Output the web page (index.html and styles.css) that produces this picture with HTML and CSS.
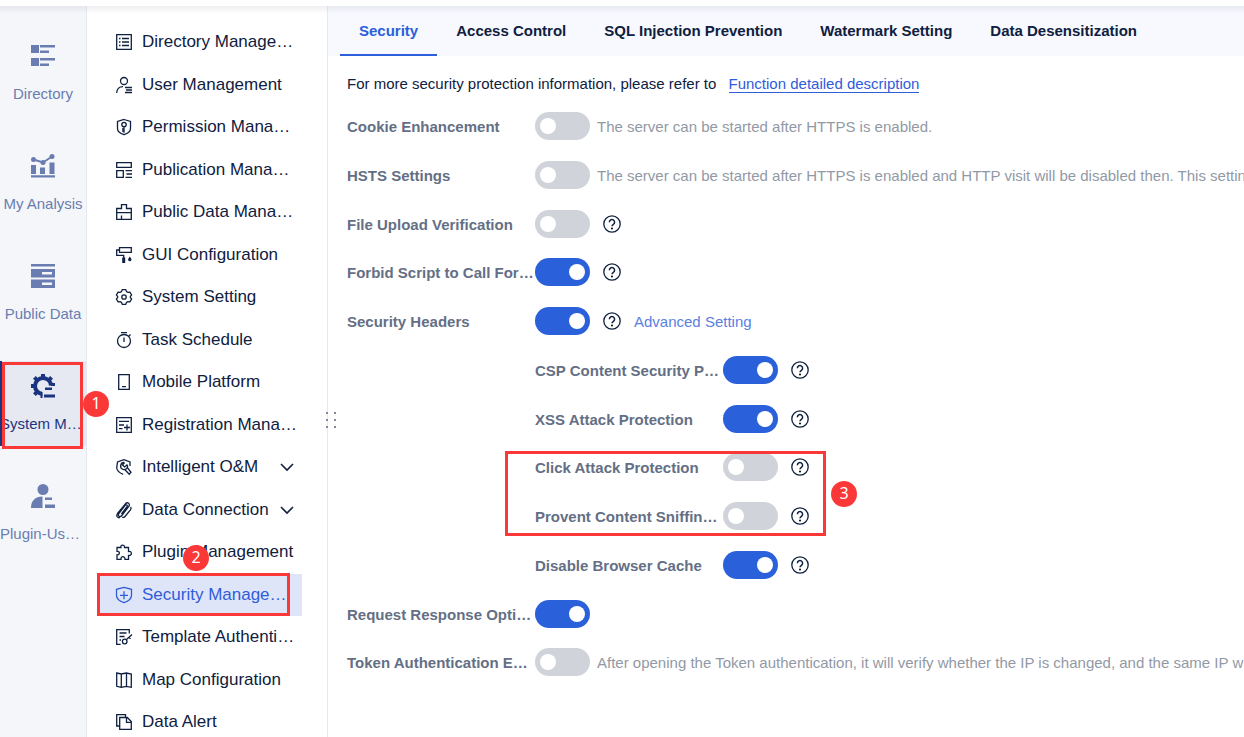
FILE: index.html
```html
<!DOCTYPE html>
<html lang="en">
<head>
  <meta charset="UTF-8" />
  <meta name="viewport" content="width=device-width, initial-scale=1.0"/>
  <title>Security Management</title>
  <link rel="stylesheet" href="styles.css">
</head>
<body>
  <svg class="defs" aria-hidden="true">
    <symbol id="help" viewBox="0 0 18 18">
      <circle cx="9" cy="9" r="8.2" fill="none" stroke="currentColor" stroke-width="1.3"/>
      <path d="M6.4 7.2a2.6 2.6 0 1 1 4 2.1c-.9.6-1.4 1-1.4 2" fill="none" stroke="currentColor" stroke-width="1.5"/>
      <circle cx="9" cy="13.4" r="1"/>
    </symbol>
  </svg>

  <div class="app">
    <nav class="sidebar">
      <a href="#" class="side-item">
        <svg viewBox="0 0 24 24"><path d="M0 1h8v8H0zM9 1h15v2.5H9zM9 6.5h9V9H9zM0 14h8v8H0zM9 14h15v2.5H9zM9 19.5h9V22H9z"/></svg>
        <span>Directory</span>
      </a>
      <a href="#" class="side-item">
        <svg viewBox="0 0 24 24"><path d="M0 11h5v9H0zM9 13.5h5V20H9zM18.5 8.5h5V20h-5zM0 21.2h24v2.3H0z"/><circle cx="2.5" cy="5.5" r="2.5"/><circle cx="12" cy="8.5" r="2.5"/><circle cx="21" cy="2.5" r="2.5"/><path d="M2.5 5.5L12 8.5l9-6" fill="none" stroke="currentColor" stroke-width="2"/></svg>
        <span>My Analysis</span>
      </a>
      <a href="#" class="side-item">
        <svg viewBox="0 0 24 24"><path fill-rule="evenodd" d="M0 0h24v2.5H0zM0 5h24v8.5H0zM11 8v2.5h10V8zM0 15.5h24V24H0zM11 18.5V21h10v-2.5z"/></svg>
        <span>Public Data</span>
      </a>
      <a href="#" class="side-item active">
        <svg viewBox="0 0 24 24"><path d="M20 11.5A8 8 0 1 0 11.500 20" fill="none" stroke="currentColor" stroke-width="4"/><path d="M10 0h4v4h-4zM0 10h4v4H0zM9.500 20h2v4h-2zM20 9h4v3h-4zM2 4.800L4.800 2l3 3L5 7.800zM19.200 2L22 4.800l-3 3L16.200 5zM2 19.200L4.800 22l3-3L5 16.200zM14 13.500h7V16h-7zM13 20.500h11v3H13z"/></svg>
        <span class="cut">System M…</span>
        <i class="mark mark-side"></i>
        <b class="step step-side">1</b>
      </a>
      <a href="#" class="side-item">
        <svg viewBox="0 0 24 24"><circle cx="12" cy="5.5" r="5.5"/><path d="M0 24c0-7 4-11.500 11.500-11.500V24zM14 13.500h7V16h-7zM14 20.500h10V24H14z"/></svg>
        <span class="cut">Plugin-Us…</span>
      </a>
    </nav>

    <nav class="menu">
      <a href="#" class="menu-item">
        <svg viewBox="0 0 16 16"><path d="M.7.7h14.600v14.600H.7zM6 4.500h7M6 8h7M6 11.500h7M3 4.500h1.500M3 8h1.500M3 11.500h1.500"/></svg>
        <span>Directory Manage…</span>
      </a>
      <a href="#" class="menu-item">
        <svg viewBox="0 0 16 16"><circle cx="8" cy="4" r="3.5"/><path d="M.7 16c0-4 2.300-6.300 6.300-6.300M9 10.500h7M10 13h6M9 15.500h7"/></svg>
        <span>User Management</span>
      </a>
      <a href="#" class="menu-item">
        <svg viewBox="0 0 16 16"><path d="M8 .5l6.500 2v7c0 3-3 5-6.500 6.200C4.500 14.500 1.500 12.500 1.500 9.500v-7z"/><circle cx="8" cy="5.5" r="2.2"/><path d="M8 7.700v6M8 10h-2M8 12h-2"/></svg>
        <span>Permission Mana…</span>
      </a>
      <a href="#" class="menu-item">
        <svg viewBox="0 0 16 16"><path d="M.7.7h14.600v4.600H.7zM.7 8.700h6.600v6.600H.7zM9.500 8.700H16M10.500 12H16M9.500 15.300H16"/></svg>
        <span>Publication Mana…</span>
      </a>
      <a href="#" class="menu-item">
        <svg viewBox="0 0 16 16"><path d="M5.500 4.500V.7h5v3.800h4.800v10.800H.7V4.500zM.7 8.700h14.600M5.500 11.500v3.800"/></svg>
        <span>Public Data Mana…</span>
      </a>
      <a href="#" class="menu-item">
        <svg viewBox="0 0 16 16"><path d="M3.500.7h11.800v4.600H3.500zM3.500 3H.7v5.300h7V11"/><path d="M6.200 10.500h3V16h-3zM13.800 9.500l1.500 2.300a1.700 1.700 0 1 1-3 0z" fill="currentColor" stroke="none"/></svg>
        <span>GUI Configuration</span>
      </a>
      <a href="#" class="menu-item">
        <svg viewBox="0 0 16 16"><path d="M6.300.6h3.400l.8 2 1.300.8 2.100-.3 1.700 2.900-1.300 1.700v.6l1.300 1.700-1.700 2.900-2.100-.3-1.300.8-.8 2H6.300l-.8-2-1.300-.8-2.100.3L.4 10l1.300-1.700v-.6L.4 6l1.700-2.900 2.100.3 1.300-.8z"/><circle cx="8" cy="8" r="2.2"/></svg>
        <span>System Setting</span>
      </a>
      <a href="#" class="menu-item">
        <svg viewBox="0 0 16 16"><circle cx="8" cy="9" r="6.5"/><path d="M5 .7h6M8 5.500v4.500M12.500 4.500l2-2"/></svg>
        <span>Task Schedule</span>
      </a>
      <a href="#" class="menu-item">
        <svg viewBox="0 0 16 16"><path d="M2.700.7h10.600v14.600H2.700zM6 12.700h4"/></svg>
        <span>Mobile Platform</span>
      </a>
      <a href="#" class="menu-item">
        <svg viewBox="0 0 16 16"><path d="M.7.7h14.600v14.600H.7zM3 4.300h10M3 8h5M3 11.700h3.500M11 7.500v6M8 10.500h6"/></svg>
        <span>Registration Mana…</span>
      </a>
      <a href="#" class="menu-item">
        <svg viewBox="0 0 16 16"><path d="M14 7V3L8 .7 1.500 3 .7 9c.5 3 3 5 6.500 6.300M8.300 3.500a3.500 3.500 0 1 0 3 5l3.700 4.800-1.800 2-4.400-4.800M8.500 3.500L6.500 6l2 2 2.500-2c.8 1 .7 2 .3 2.700"/></svg>
        <span>Intelligent O&amp;M</span>
        <svg class="arrow" viewBox="0 0 14 8"><path d="M1 1l6 6 6-6"/></svg>
      </a>
      <a href="#" class="menu-item">
        <svg viewBox="0 0 16 16"><path d="M5.500 12l5.500-7.300c1-1.400-.8-2.700-1.900-1.300L3 11.400c-1.700 2.400 1 4.400 2.800 2.100l7-9.100C14.500 1.700 11.500-.5 9.400 1.800L1.500 11.500c-2 3 .8 4.800 2.500 4M14.500 5c.8.800.5 2-.3 3.100L9 14.500c-.8 1-2 1.200-2.800.5"/></svg>
        <span>Data Connection</span>
        <svg class="arrow" viewBox="0 0 14 8"><path d="M1 1l6 6 6-6"/></svg>
      </a>
      <a href="#" class="menu-item">
        <svg viewBox="0 0 16 16"><path d="M1 3.500h4C4 .2 9 .2 8.500 3.500h4v4c3.800-.8 3.800 4.500 0 4v3.800H9c.2-3.500-4.500-3.500-4 0H1v-4.500c3.200.3 3.200-3.800 0-3.500z"/></svg>
        <span>Plugin Management</span>
      </a>
      <a href="#" class="menu-item selected">
        <svg viewBox="0 0 16 16"><path d="M8 .3l7.500 2v6c0 3.500-3 6-7.500 7.400C3.500 14.300.5 11.800.5 8.300v-6zM8 4.300v8M4 8.300h8"/></svg>
        <span>Security Manage…</span>
        <i class="mark mark-menu"></i>
        <b class="step step-menu">2</b>
      </a>
      <a href="#" class="menu-item">
        <svg viewBox="0 0 16 16"><path d="M13.300 4.500V.7H.7v14.600h4M3.500 4h7M3.500 7.500h5M3.500 11H5M10.500 10.500L16 5.500M13 8.300l1.500 1.500"/><circle cx="8.700" cy="12.500" r="2.300"/></svg>
        <span>Template Authenti…</span>
      </a>
      <a href="#" class="menu-item">
        <svg viewBox="0 0 16 16"><path d="M.7 1l4.600 1 5-1 5 1v13.300l-5-1-5 1-4.600-1zM5.300 2v13M10.500 1v13"/></svg>
        <span>Map Configuration</span>
      </a>
      <a href="#" class="menu-item">
        <svg viewBox="0 0 16 16"><path d="M3.500 12H.7V.7h8.800v2.500M3.700 3.500h7.600l4 4v7.800H3.700zM10.500 3.500v4.800h4.800"/></svg>
        <span>Data Alert</span>
      </a>
      <i class="drag-handle"></i>
    </nav>

    <main class="main">
      <div class="tabs">
        <button class="tab current">Security</button>
        <button class="tab">Access Control</button>
        <button class="tab">SQL Injection Prevention</button>
        <button class="tab">Watermark Setting</button>
        <button class="tab">Data Desensitization</button>
      </div>

      <div class="content">
        <p class="info">For more security protection information, please refer to <a href="#">Function detailed description</a></p>

        <form class="settings">
          <div class="row">
            <label for="cookie">Cookie Enhancement</label>
            <input type="checkbox" class="switch" id="cookie">
            <span class="hint">The server can be started after HTTPS is enabled.</span>
          </div>
          <div class="row">
            <label for="hsts">HSTS Settings</label>
            <input type="checkbox" class="switch" id="hsts">
            <span class="hint">The server can be started after HTTPS is enabled and HTTP visit will be disabled then. This setting</span>
          </div>
          <div class="row">
            <label for="upload">File Upload Verification</label>
            <input type="checkbox" class="switch" id="upload">
            <svg class="help"><use href="#help"/></svg>
          </div>
          <div class="row">
            <label for="script">Forbid Script to Call For…</label>
            <input type="checkbox" class="switch" id="script" checked>
            <svg class="help"><use href="#help"/></svg>
          </div>
          <div class="row">
            <label for="headers">Security Headers</label>
            <input type="checkbox" class="switch" id="headers" checked>
            <svg class="help"><use href="#help"/></svg>
            <a href="#" class="advanced">Advanced Setting</a>
          </div>
          <div class="row sub">
            <label for="csp">CSP Content Security P…</label>
            <input type="checkbox" class="switch" id="csp" checked>
            <svg class="help"><use href="#help"/></svg>
          </div>
          <div class="row sub">
            <label for="xss">XSS Attack Protection</label>
            <input type="checkbox" class="switch" id="xss" checked>
            <svg class="help"><use href="#help"/></svg>
          </div>
          <div class="row sub">
            <label for="click">Click Attack Protection</label>
            <input type="checkbox" class="switch" id="click">
            <svg class="help"><use href="#help"/></svg>
            <i class="mark mark-rows"></i>
            <b class="step step-rows">3</b>
          </div>
          <div class="row sub">
            <label for="sniff">Provent Content Sniffin…</label>
            <input type="checkbox" class="switch" id="sniff">
            <svg class="help"><use href="#help"/></svg>
          </div>
          <div class="row sub">
            <label for="cache">Disable Browser Cache</label>
            <input type="checkbox" class="switch" id="cache" checked>
            <svg class="help"><use href="#help"/></svg>
          </div>
          <div class="row">
            <label for="options">Request Response Opti…</label>
            <input type="checkbox" class="switch" id="options" checked>
          </div>
          <div class="row">
            <label for="token">Token Authentication E…</label>
            <input type="checkbox" class="switch" id="token">
            <span class="hint">After opening the Token authentication, it will verify whether the IP is changed, and the same IP will</span>
          </div>
        </form>
      </div>
    </main>
  </div>
</body>
</html>
```

FILE: styles.css
```css
* { box-sizing: border-box; }
body {
  font-family: "Liberation Sans", Arial, sans-serif;
  font-size: 15px;
  line-height: 20px;
  color: #0f2040;
  background: #fff;
  margin: 0;
  padding-top: 6px;
  height: 100vh;
  overflow: hidden;
}
a { text-decoration: none; color: inherit; }
.defs { display: none; }

.app {
  position: relative;
  display: flex;
  height: 100%;
}
/* shadow under the top bar */
.app::before {
  content: "";
  position: absolute;
  top: 0; left: 0; right: 0;
  height: 8px;
  z-index: 3;
  background: linear-gradient(rgba(30, 40, 70, 0.07), rgba(30, 40, 70, 0));
}

/* left bar */
.sidebar {
  flex: 0 0 87px;
  display: flex;
  flex-direction: column;
  gap: 25px;
  padding-top: 25px;
  background: #f4f6fa;
  border-right: 1px solid #e6e8f0;
}
.side-item {
  position: relative;
  flex: none;
  display: flex;
  flex-direction: column;
  align-items: center;
  gap: 16px;
  height: 85px;
  padding-top: 13px;
  color: #6a7db0;
  white-space: nowrap;
}
.side-item svg { width: 24px; height: 24px; flex: none; fill: currentColor; }
.side-item .cut { align-self: flex-start; }
.side-item.active { background: #e6e9f1; color: #1b3480; box-shadow: inset 2px 0 #1b3480; }

/* menu */
.menu {
  position: relative;
  flex: 0 0 241px;
  padding: 15px 25px 0 10px;
  border-right: 1px solid #e8eaf0;
}
.menu-item {
  position: relative;
  display: flex;
  align-items: center;
  gap: 10px;
  height: 42px;
  padding-left: 19px;
  font-size: 17px;
  white-space: nowrap;
}
.menu-item:nth-child(odd) { margin-bottom: 1px; }
.menu-item svg {
  width: 16px;
  height: 16px;
  flex: none;
  overflow: visible;
  fill: none;
  stroke: currentColor;
  stroke-width: 1.3;
}
.menu-item .arrow { width: 14px; height: 8px; margin: 0 8px 0 auto; stroke-width: 1.6; }
.menu-item.selected { background: #dfe5f9; color: #2f5cdb; }
.drag-handle {
  position: absolute;
  top: 405px; right: -10px;
  width: 12px;
  height: 19px;
  background: radial-gradient(circle at 2px 2px, #8088a0 1px, transparent 1px) 0 0 / 8px 7px;
}

/* tabs */
.main { flex: 1; min-width: 0; overflow: hidden; }
.tabs { display: flex; height: 50px; padding-left: 12px; background: #f7f9fe; }
.tab {
  padding: 0 19px;
  border: none;
  border-bottom: 2px solid transparent;
  background: none;
  font: bold 15px "Liberation Sans", Arial, sans-serif;
  color: #0f2040;
  white-space: nowrap;
  cursor: pointer;
}
.tab.current { color: #2b5fdb; border-color: #2b5fdb; }

/* settings */
.content { padding: 10px 0 0 19px; }
.info { margin: 0; line-height: 36px; white-space: nowrap; }
.info a { margin-left: 8px; color: #2f5cdb; border-bottom: 1px solid #2b5fdb; }
.row {
  position: relative;
  display: flex;
  align-items: center;
  height: 49px;
  white-space: nowrap;
}
.row:nth-child(4n) { height: 48px; }
.row.sub { margin-left: 188px; }
.row label { flex: 0 0 188px; font-weight: bold; color: #646f85; }
.switch {
  appearance: none;
  flex: none;
  display: flex;
  align-items: center;
  width: 55px;
  height: 28px;
  margin: 0 0 2px;
  padding: 0 5px;
  border-radius: 14px;
  background: #d0d3da;
  cursor: pointer;
}
.switch::before { content: ""; width: 16px; height: 16px; border-radius: 50%; background: #fff; }
.switch:checked { justify-content: flex-end; background: #2b60db; }
.hint { margin-left: 7px; color: #9299a6; }
.help { flex: none; width: 18px; height: 18px; margin: 0 0 2px 13px; }
.advanced { margin-left: 13px; color: #5a80e2; }

/* red step markers */
.mark { position: absolute; z-index: 4; border: 3px solid #fb3838; }
.step {
  position: absolute;
  z-index: 5;
  width: 26px;
  height: 26px;
  border-radius: 50%;
  background: #fb3838;
  color: #fff;
  font: 16px/24px "Noto Sans", sans-serif;
  text-align: center;
}
.mark-side { left: 2px; top: 1px; width: 81px; height: 87px; }
.step-side { left: 83px; top: 30px; }
.mark-menu { left: 0; top: -1px; width: 193px; height: 43px; }
.step-menu { left: 86px; top: -29px; }
.mark-rows { left: -30px; top: 7px; width: 321px; height: 85px; }
.step-rows { left: 296px; top: 37px; }
```
